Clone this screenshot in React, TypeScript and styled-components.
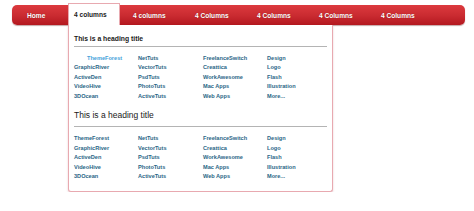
import styled, { createGlobalStyle } from "styled-components";

const Global = createGlobalStyle`
  html, body {
    margin: 0;
    padding: 0;
    background: #fff;
  }
  body {
    font-family: "Liberation Sans", Arial, sans-serif;
  }
`;

const Page = styled.div`
  padding: 5px 9px 0 12px;
`;

const Bar = styled.ul`
  list-style: none;
  margin: 0;
  padding: 0;
  display: flex;
  width: 453px;
  height: 20px;
  border-radius: 5px;
  background: linear-gradient(to bottom, #dc3a3e 0%, #c92a30 55%, #b3181f 100%);
  box-shadow: 0 1px 1px rgba(90, 0, 0, 0.35);
`;

const Item = styled.li<{ $w: number; $pad: number }>`
  width: ${(p) => p.$w}px;
  padding-left: ${(p) => p.$pad}px;
  box-sizing: border-box;
  display: flex;
  align-items: center;
  font-size: 6.6px;
  font-weight: bold;
  color: #fff;
  text-shadow: 0 0 1px rgba(80, 0, 0, 0.5);
  white-space: nowrap;
`;

const ActiveItem = styled.li`
  width: 52px;
  box-sizing: border-box;
  margin-top: -2px;
  height: 22px;
  padding-left: 5px;
  display: flex;
  align-items: center;
  background: #fff;
  border: 1px solid #e8a9b0;
  border-bottom: none;
  font-size: 6.6px;
  font-weight: bold;
  color: #222;
  white-space: nowrap;
`;

const Panel = styled.div`
  margin-left: 56px;
  width: 265px;
  box-sizing: border-box;
  padding: 0 5px 9px 5px;
  background: #fff;
  border: 1px solid #e8a9b0;
  border-top: none;
  border-radius: 0 0 3px 3px;
  box-shadow: 0 1px 2px rgba(160, 60, 70, 0.25);
`;

const Heading = styled.h4<{ $big?: boolean }>`
  margin: ${(p) => (p.$big ? "7.5px 0 0" : "0")};
  padding: ${(p) => (p.$big ? "0 0 5px" : "9px 0 2px")};
  font-size: ${(p) => (p.$big ? "8.5px" : "6.8px")};
  line-height: ${(p) => (p.$big ? "12px" : "10px")};
  font-weight: ${(p) => (p.$big ? "normal" : "bold")};
  color: #1a1a1a;
  border-bottom: 1px solid #b4b4b4;
`;

const Links = styled.ul<{ $gap: number }>`
  list-style: none;
  margin: ${(p) => p.$gap}px 0 0;
  padding: 0;
  display: grid;
  grid-template-columns: 64px 65px 64px 1fr;
  grid-auto-flow: column;
  grid-template-rows: repeat(5, 9.6px);
`;

const LinkItem = styled.li<{ $hover?: boolean }>`
  font-size: 5.6px;
  line-height: 9.6px;
  font-weight: bold;
  white-space: nowrap;
  color: ${(p) => (p.$hover ? "#45a2da" : "#2a6686")};
  padding-left: ${(p) => (p.$hover ? "13px" : "0")};
`;

const columns = [
  ["ThemeForest", "GraphicRiver", "ActiveDen", "VideoHive", "3DOcean"],
  ["NetTuts", "VectorTuts", "PsdTuts", "PhotoTuts", "ActiveTuts"],
  ["FreelanceSwitch", "Creattica", "WorkAwesome", "Mac Apps", "Web Apps"],
  ["Design", "Logo", "Flash", "Illustration", "More..."],
];

const LinkGrid = ({ hoverFirst, gap }: { hoverFirst?: boolean; gap: number }) => (
  <Links $gap={gap}>
    {columns.flat().map((name, i) => (
      <LinkItem key={i} $hover={hoverFirst && i === 0}>
        {name}
      </LinkItem>
    ))}
  </Links>
);

export default function App() {
  return (
    <Page>
      <Global />
      <Bar>
        <Item $w={56} $pad={15}>Home</Item>
        <ActiveItem>4 columns</ActiveItem>
        <Item $w={62} $pad={13}>4 columns</Item>
        <Item $w={62} $pad={13}>4 Columns</Item>
        <Item $w={62} $pad={13}>4 Columns</Item>
        <Item $w={62} $pad={13}>4 Columns</Item>
        <Item $w={62} $pad={13}>4 Columns</Item>
      </Bar>
      <Panel>
        <Heading>This is a heading title</Heading>
        <LinkGrid hoverFirst gap={6.5} />
        <Heading $big>This is a heading title</Heading>
        <LinkGrid gap={7} />
      </Panel>
    </Page>
  );
}
